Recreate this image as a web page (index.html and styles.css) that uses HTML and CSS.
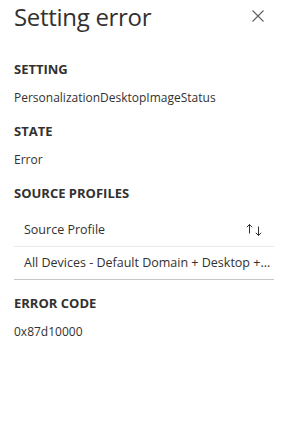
FILE: index.html
```html
<!DOCTYPE html>
<html lang="en">
<head>
  <meta charset="UTF-8" />
  <title>Setting error</title>
  <meta name="viewport" content="width=device-width, initial-scale=1.0" />
  <link rel="stylesheet" href="styles.css">
</head>
<body>
  <div class="panel">
    <div class="panel-header">
      <h1>Setting error</h1>
      <button class="close" aria-label="Close">
        <svg width="12" height="12" viewBox="0 0 12 12">
          <path d="M0.5 0.5 L11.5 11.5 M11.5 0.5 L0.5 11.5" stroke="#605e5c" stroke-width="1.1" fill="none" />
        </svg>
      </button>
    </div>

    <div class="section first">
      <h3>SETTING</h3>
      <div class="value">PersonalizationDesktopImageStatus</div>
    </div>

    <div class="section">
      <h3>STATE</h3>
      <div class="value">Error</div>
    </div>

    <div class="section">
      <h3>SOURCE PROFILES</h3>
      <div class="grid">
        <div class="grid-head">
          <span>Source Profile</span>
          <svg class="sort" width="18" height="12" viewBox="0 0 18 12">
            <path d="M4.5 0.5 V9.5 M1.8 3.2 L4.5 0.5 L7.2 3.2" stroke="#323130" stroke-width="1" fill="none" />
            <path d="M13.5 2.5 V11.5 M10.8 8.8 L13.5 11.5 L16.2 8.8" stroke="#323130" stroke-width="1" fill="none" />
          </svg>
        </div>
        <div class="grid-row">All Devices - Default Domain + Desktop +...</div>
      </div>
    </div>

    <div class="section last">
      <h3>ERROR CODE</h3>
      <div class="value">0x87d10000</div>
    </div>
  </div>
</body>
</html>
```

FILE: styles.css
```css
body {
  margin: 0;
  font-family: "Open Sans", "Noto Sans", sans-serif;
  color: #323130;
  background-color: #fff;
}
.panel {
  padding: 0 19px 0 14px;
}
.panel-header {
  display: flex;
  justify-content: space-between;
  align-items: center;
  height: 32px;
}
h1 {
  margin: 0;
  font-size: 24px;
  font-weight: 400;
  letter-spacing: -0.3px;
}
.close {
  border: none;
  background: none;
  padding: 0;
  margin-right: 10px;
  display: flex;
}
.section {
  margin-top: 15px;
}
.section.first {
  margin-top: 28px;
}
.section.last {
  margin-top: 14px;
}
h3 {
  margin: 0 0 11px;
  font-size: 13px;
  font-weight: 700;
  line-height: 18px;
}
.value {
  font-size: 12px;
  line-height: 18px;
}
.grid {
  margin-top: 7px;
  font-size: 12.5px;
}
.grid-head {
  display: flex;
  justify-content: space-between;
  align-items: center;
  height: 33px;
  padding: 0 11px 0 10px;
  border-bottom: 1px solid #edebe9;
}
.grid-row {
  height: 32px;
  line-height: 32px;
  padding-left: 10px;
  white-space: nowrap;
  border-bottom: 1px solid #c8c6c4;
}
```
